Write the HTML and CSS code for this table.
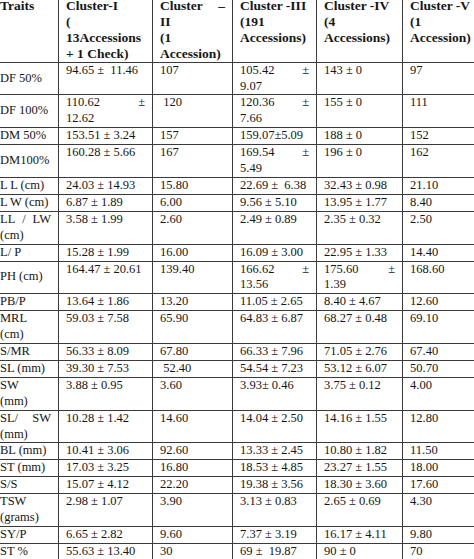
FILE: index.html
```html
<!DOCTYPE html>
<html>
<head>
<meta charset="utf-8">
<link rel="stylesheet" href="styles.css">
</head>
<body>
<table class="tbl">
<colgroup>
<col class="c1"><col class="c2"><col class="c3"><col class="c4"><col class="c5"><col class="c6">
</colgroup>
<thead>
<tr>
<th>Traits</th>
<th>Cluster-I<br>(<br>13Accessions<br>+ 1 Check)</th>
<th><div class="jl"><span>Cluster</span><span>–</span></div>II<br>(1<br>Accession)</th>
<th>Cluster -III<br>(191<br>Accessions)</th>
<th>Cluster -IV<br>(4<br>Accessions)</th>
<th>Cluster -V<br>(1<br>Accession)</th>
</tr>
</thead>
<tbody>
<tr><td class="tr">DF 50%</td><td>94.65 ± &nbsp;11.46</td><td>107</td><td><div class="jl"><span>105.42</span><span>±</span></div>9.07</td><td>143 ± 0</td><td>97</td></tr>
<tr><td class="tr">DF 100%</td><td><div class="jl"><span>110.62</span><span>±</span></div>12.62</td><td>&nbsp;120</td><td><div class="jl"><span>120.36</span><span>±</span></div>7.66</td><td>155 ± 0</td><td>111</td></tr>
<tr><td class="tr">DM 50%</td><td>153.51 ± 3.24</td><td>157</td><td>159.07±5.09</td><td>188 ± 0</td><td>152</td></tr>
<tr><td class="tr">DM100%</td><td>160.28 ± 5.66</td><td>167</td><td><div class="jl"><span>169.54</span><span>±</span></div>5.49</td><td>196 ± 0</td><td>162</td></tr>
<tr><td class="tr">L L (cm)</td><td>24.03 ± 14.93</td><td>15.80</td><td>22.69 ± &nbsp;6.38</td><td>32.43 ± 0.98</td><td>21.10</td></tr>
<tr><td class="tr">L W (cm)</td><td>6.87 ± 1.89</td><td>6.00</td><td>9.56 ± 5.10</td><td>13.95 ± 1.77</td><td>8.40</td></tr>
<tr><td class="tr"><div class="jl"><span>LL</span><span>/</span><span>LW</span></div>(cm)</td><td>3.58 ± 1.99</td><td>2.60</td><td>2.49 ± 0.89</td><td>2.35 ± 0.32</td><td>2.50</td></tr>
<tr><td class="tr">L/ P</td><td>15.28 ± 1.99</td><td>16.00</td><td>16.09 ± 3.00</td><td>22.95 ± 1.33</td><td>14.40</td></tr>
<tr><td class="tr">PH (cm)</td><td>164.47 ± 20.61</td><td>139.40</td><td><div class="jl"><span>166.62</span><span>±</span></div>13.56</td><td><div class="jl"><span>175.60</span><span>±</span></div>1.39</td><td>168.60</td></tr>
<tr><td class="tr">PB/P</td><td>13.64 ± 1.86</td><td>13.20</td><td>11.05 ± 2.65</td><td>8.40 ± 4.67</td><td>12.60</td></tr>
<tr><td class="tr">MRL<br>(cm)</td><td>59.03 ± 7.58</td><td>65.90</td><td>64.83 ± 6.87</td><td>68.27 ± 0.48</td><td>69.10</td></tr>
<tr><td class="tr">S/MR</td><td>56.33 ± 8.09</td><td>67.80</td><td>66.33 ± 7.96</td><td>71.05 ± 2.76</td><td>67.40</td></tr>
<tr><td class="tr">SL (mm)</td><td>39.30 ± 7.53</td><td>&nbsp;52.40</td><td>54.54 ± 7.23</td><td>53.12 ± 6.07</td><td>50.70</td></tr>
<tr><td class="tr">SW<br>(mm)</td><td>3.88 ± 0.95</td><td>3.60</td><td>3.93± 0.46</td><td>3.75 ± 0.12</td><td>4.00</td></tr>
<tr><td class="tr"><div class="jl"><span>SL/</span><span>SW</span></div>(mm)</td><td>10.28 ± 1.42</td><td>14.60</td><td>14.04 ± 2.50</td><td>14.16 ± 1.55</td><td>12.80</td></tr>
<tr><td class="tr">BL (mm)</td><td>10.41 ± 3.06</td><td>92.60</td><td>13.33 ± 2.45</td><td>10.80 ± 1.82</td><td>11.50</td></tr>
<tr><td class="tr">ST (mm)</td><td>17.03 ± 3.25</td><td>16.80</td><td>18.53 ± 4.85</td><td>23.27 ± 1.55</td><td>18.00</td></tr>
<tr><td class="tr">S/S</td><td>15.07 ± 4.12</td><td>22.20</td><td>19.38 ± 3.56</td><td>18.30 ± 3.60</td><td>17.60</td></tr>
<tr><td class="tr">TSW<br>(grams)</td><td>2.98 ± 1.07</td><td>3.90</td><td>3.13 ± 0.83</td><td>2.65 ± 0.69</td><td>4.30</td></tr>
<tr><td class="tr">SY/P</td><td>6.65 ± 2.82</td><td>9.60</td><td>7.37 ± 3.19</td><td>16.17 ± 4.11</td><td>9.80</td></tr>
<tr><td class="tr">ST %</td><td>55.63 ± 13.40</td><td>30</td><td>69 ± &nbsp;19.87</td><td>90 ± 0</td><td>70</td></tr>
</tbody>
</table>
</body>
</html>
```
FILE: styles.css
```css
html, body {
  margin: 0;
  padding: 0;
  overflow: hidden;
  background: #ffffff;
}
body {
  font-family: "Liberation Serif", "Times New Roman", serif;
  color: #161616;
}
.tbl {
  border-collapse: collapse;
  table-layout: fixed;
  width: 496px;
  margin-left: -8px;
  margin-top: -3px;
  font-size: 12.5px;
  line-height: 15.9px;
}
.c1 { width: 66px; }
.c2 { width: 94px; }
.c3 { width: 80px; }
.c4 { width: 84px; }
.c5 { width: 86px; }
.c6 { width: 86px; }
.tbl th, .tbl td {
  border: 1px solid #3a3a3a;
  padding: 0 7px;
  text-align: left;
  vertical-align: top;
  white-space: nowrap;
}
.tbl th {
  font-weight: bold;
  font-size: 13.5px;
}
.tbl td.tr {
  vertical-align: middle;
}
.jl {
  display: flex;
  justify-content: space-between;
}
```
